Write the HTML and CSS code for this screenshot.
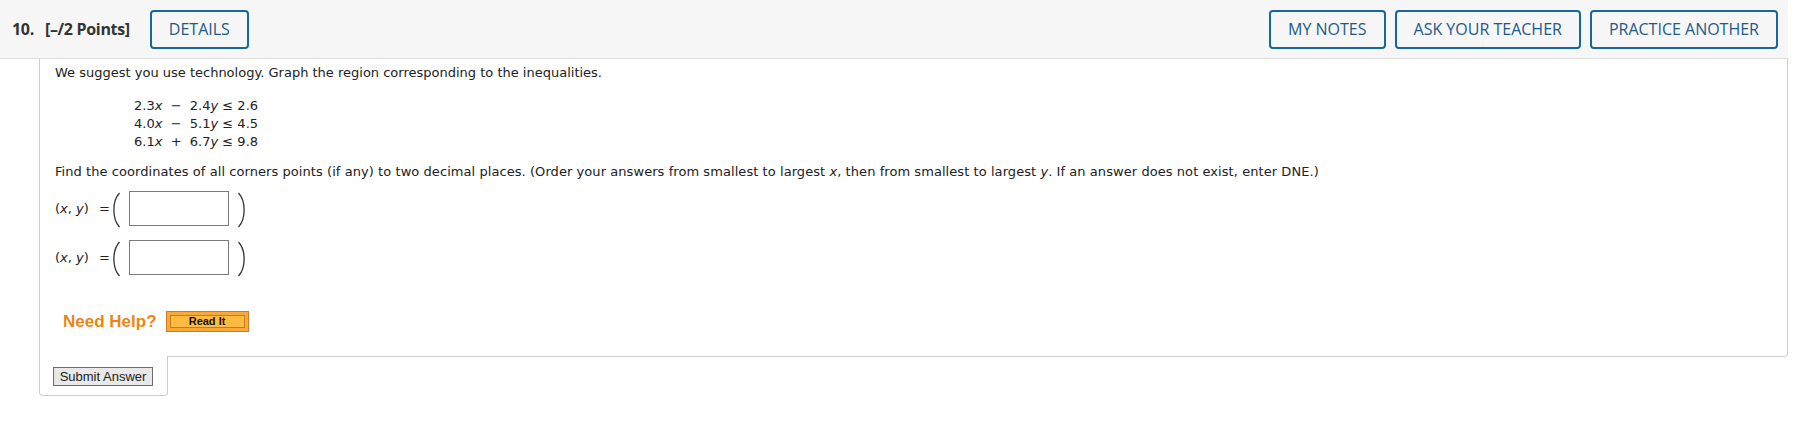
FILE: index.html
```html
<!DOCTYPE html>
<html>
<head>
<meta charset="utf-8">
<link rel="stylesheet" href="styles.css">
</head>
<body>
<div class="page">
  <div class="header">
    <span class="qnum">10.</span>
    <span class="points">[–/2 Points]</span>
    <button class="hbtn details">DETAILS</button>
    <div class="spacer"></div>
    <button class="hbtn">MY NOTES</button>
    <button class="hbtn">ASK YOUR TEACHER</button>
    <button class="hbtn">PRACTICE ANOTHER</button>
  </div>
  <div class="card">
    <p class="intro">We suggest you use technology. Graph the region corresponding to the inequalities.</p>
    <div class="ineqs">
      <div>2.3<i>x</i> &nbsp;−&nbsp; 2.4<i>y</i> ≤ 2.6</div>
      <div>4.0<i>x</i> &nbsp;−&nbsp; 5.1<i>y</i> ≤ 4.5</div>
      <div>6.1<i>x</i> &nbsp;+&nbsp; 6.7<i>y</i> ≤ 9.8</div>
    </div>
    <p class="find">Find the coordinates of all corners points (if any) to two decimal places. (Order your answers from smallest to largest <i>x</i>, then from smallest to largest <i>y</i>. If an answer does not exist, enter DNE.)</p>
    <div class="ansrow first">
      <span class="lbl">(<i>x</i>, <i>y</i>)</span>
      <span class="eq">=</span>
      <svg class="paren" width="10" height="36" viewBox="0 0 10 36"><path d="M8.5 1 C1 9 1 27 8.5 35" fill="none" stroke="#333" stroke-width="1.3"/></svg>
      <input class="ans" type="text">
      <svg class="paren" width="10" height="36" viewBox="0 0 10 36"><path d="M1.5 1 C9 9 9 27 1.5 35" fill="none" stroke="#333" stroke-width="1.3"/></svg>
    </div>
    <div class="ansrow second">
      <span class="lbl">(<i>x</i>, <i>y</i>)</span>
      <span class="eq">=</span>
      <svg class="paren" width="10" height="36" viewBox="0 0 10 36"><path d="M8.5 1 C1 9 1 27 8.5 35" fill="none" stroke="#333" stroke-width="1.3"/></svg>
      <input class="ans" type="text">
      <svg class="paren" width="10" height="36" viewBox="0 0 10 36"><path d="M1.5 1 C9 9 9 27 1.5 35" fill="none" stroke="#333" stroke-width="1.3"/></svg>
    </div>
    <div class="help">
      <span class="needhelp">Need Help?</span>
      <button class="readit"><span>Read It</span></button>
    </div>
  </div>
  <div class="tab">
    <button class="submit">Submit Answer</button>
  </div>
</div>
</body>
</html>
```

FILE: styles.css
```css
html, body {
  margin: 0;
  padding: 0;
  background: #fff;
}
.page {
  width: 1788px;
  font-family: "DejaVu Sans", Verdana, sans-serif;
  font-size: 13px;
  color: #222;
}
.header {
  height: 58px;
  background: #f6f6f6;
  border-bottom: 1px solid #dcdcdc;
  display: flex;
  align-items: center;
  padding: 0 10px 0 12px;
  font-family: "Open Sans", sans-serif;
}
.qnum, .points {
  font-size: 16px;
  font-weight: 700;
  letter-spacing: -0.02em;
  color: #333;
}
.points {
  margin-left: 11px;
}
.spacer {
  flex: 1;
}
.hbtn {
  height: 39px;
  box-sizing: border-box;
  border: 2px solid #1567a0;
  border-radius: 4px;
  background: transparent;
  color: #1d5a8c;
  font-family: "Open Sans", sans-serif;
  font-size: 16px;
  padding: 0 17px;
  margin-left: 9px;
}
.details {
  margin-left: 20px;
  padding: 0 17px;
}
.card {
  margin-left: 39px;
  border: 1px solid #cfcfcf;
  border-top: none;
  border-radius: 0 0 4px 0;
  padding: 5px 15px 24px 15px;
}
.card p {
  margin: 0;
  line-height: 18px;
}
.card p.find {
  letter-spacing: 0.005em;
}
.card i {
  font-style: italic;
}
.ineqs {
  margin: 15px 0 12px 79px;
  line-height: 18px;
}
.ansrow {
  display: flex;
  align-items: center;
  height: 36px;
}
.ansrow.first {
  margin-top: 9px;
}
.ansrow.second {
  margin-top: 13px;
}
.lbl {
  width: 44px;
}
.eq {
  width: 12px;
}
.paren {
  margin-top: 3px;
}
.ans {
  width: 100px;
  height: 35px;
  box-sizing: border-box;
  border: 1px solid #7a7a7a;
  margin: 0 8px;
  padding: 0;
  background: #fff;
}
.help {
  display: flex;
  align-items: center;
  margin-top: 36px;
  padding-left: 8px;
}
.needhelp {
  font-family: "Liberation Sans", Arial, sans-serif;
  font-weight: 700;
  font-size: 17px;
  color: #ea8614;
}
.readit {
  margin-left: 9px;
  width: 83px;
  height: 21px;
  box-sizing: border-box;
  border: 1px solid #d17c1c;
  background: #f7a93a;
  padding: 3px;
  display: flex;
}
.readit span {
  flex: 1;
  border: 1px solid #c57a2a;
  background: #ffbb40;
  font-family: "Liberation Sans", Arial, sans-serif;
  font-weight: 700;
  font-size: 11px;
  color: #111;
  line-height: 11px;
  text-align: center;
}
.tab {
  width: 129px;
  box-sizing: border-box;
  margin-left: 39px;
  margin-top: -1px;
  height: 40px;
  background: #fff;
  border: 1px solid #cfcfcf;
  border-top: none;
  border-radius: 0 0 4px 4px;
  padding: 11px 0 0 13px;
}
.submit {
  width: 100px;
  height: 19px;
  box-sizing: border-box;
  border: 1px solid #6b6b6b;
  background: #e8e8e8;
  font-family: "Liberation Sans", Arial, sans-serif;
  font-size: 13px;
  color: #222;
  padding: 0;
  line-height: 17px;
}
```
